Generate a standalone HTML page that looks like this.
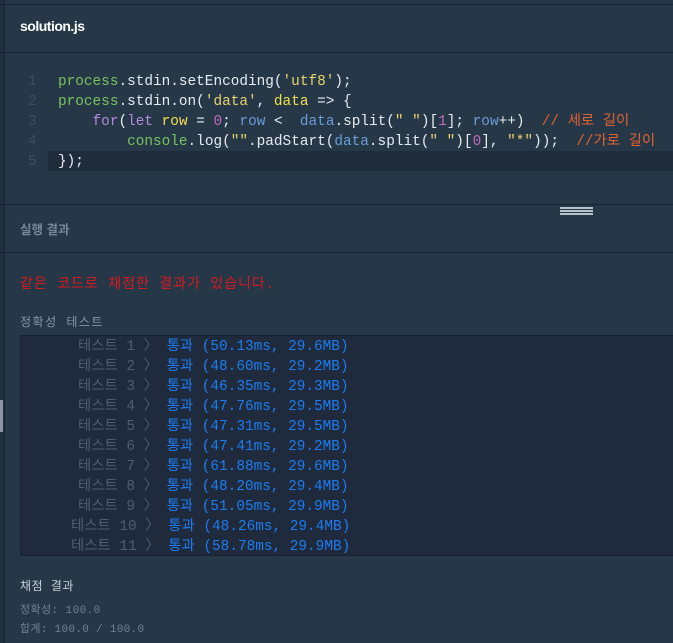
<!DOCTYPE html>
<html><head><meta charset="utf-8"><style>
*{margin:0;padding:0;box-sizing:border-box}
body{width:673px;height:643px;background:#263747;overflow:hidden;position:relative;font-family:"Liberation Mono","Noto Sans CJK KR",monospace;color:#dfe4ea}
.abs{position:absolute}
.hl{position:absolute;left:0;right:0;height:1px;background:#172232}
.code{position:absolute;left:58px;top:71px;font-size:14.4px;line-height:20px;white-space:pre;color:#e6ebf0}
.ln{position:absolute;left:28px;top:71px;font-size:14.4px;line-height:20px;white-space:pre;color:#3f4f60}
.g{color:#78c35f}.y{color:#f4de4c}.p{color:#b489e0}.b{color:#6a9ed8}.n{color:#c06ab8}.c{color:#e0622f}.s{color:#e8d46a}
.box{position:absolute;left:20px;top:335px;width:660px;height:221px;background:#1f2b3c;border:1px solid #17212f}
.row{position:absolute;height:20px;line-height:20px;font-size:14.4px;white-space:pre}
.t{color:#4e5c6b}.ok{color:#1d7cf2}
</style></head><body>
<div class="abs" style="left:0;top:0;width:4px;height:643px;background:#202e3d"></div>
<div class="abs" style="left:4px;top:0;width:1px;height:643px;background:#172232"></div>
<div class="abs" style="left:0;top:400px;width:3px;height:32px;background:#8a96a3"></div>
<div class="hl" style="top:4px"></div>
<div class="abs" style="left:20px;top:18px;font-family:'Liberation Sans',sans-serif;font-weight:bold;font-size:14px;letter-spacing:-0.5px;color:#fff">solution.js</div>
<div class="hl" style="top:52px"></div>
<div class="abs" style="left:48px;top:151px;right:0;height:20px;background:#1f2c3c"></div>
<div class="ln" style="top:72px">1
2
3
4
5</div>
<div class="code" style="top:72px"><span class="g">process</span>.stdin.setEncoding(<span class="s">'utf8'</span>);
<span class="g">process</span>.stdin.on(<span class="s">'data'</span>, <span class="y">data</span> => {
    <span class="p">for</span>(<span class="p">let</span> <span class="y">row</span> = <span class="n">0</span>; <span class="b">row</span> &lt;  <span class="b">data</span>.split(<span class="s">" "</span>)[<span class="n">1</span>]; <span class="b">row</span>++)  <span class="c">// 세로 길이</span>
        <span class="g">console</span>.log(<span class="s">""</span>.padStart(<span class="b">data</span>.split(<span class="s">" "</span>)[<span class="n">0</span>], <span class="s">"*"</span>));  <span class="c">//가로 길이</span>
});</div>
<div class="hl" style="top:204px"></div>
<div class="abs" style="left:560px;top:207px;width:33px;height:2px;background:#b8c2cc"></div>
<div class="abs" style="left:560px;top:210px;width:33px;height:2px;background:#b8c2cc"></div>
<div class="abs" style="left:560px;top:213px;width:33px;height:2px;background:#b8c2cc"></div>
<div class="abs" style="left:20px;top:219px;font-family:'Liberation Sans','Noto Sans CJK KR',sans-serif;font-weight:bold;font-size:12.5px;color:#78889a">실행 결과</div>
<div class="hl" style="top:252px"></div>
<div class="abs" style="left:20px;top:273px;font-size:14px;letter-spacing:1px;color:#d8191f">같은 코드로 채점한 결과가 있습니다.</div>
<div class="abs" style="left:20px;top:313px;font-size:12px;letter-spacing:1.5px;color:#8795a3">정확성  테스트</div>
<div class="box"></div>
<div class="row" style="top:337px;left:78px"><span class="t">테스트 1 〉 </span><span class="ok">통과 (50.13ms, 29.6MB)</span></div>
<div class="row" style="top:357px;left:78px"><span class="t">테스트 2 〉 </span><span class="ok">통과 (48.60ms, 29.2MB)</span></div>
<div class="row" style="top:377px;left:78px"><span class="t">테스트 3 〉 </span><span class="ok">통과 (46.35ms, 29.3MB)</span></div>
<div class="row" style="top:397px;left:78px"><span class="t">테스트 4 〉 </span><span class="ok">통과 (47.76ms, 29.5MB)</span></div>
<div class="row" style="top:417px;left:78px"><span class="t">테스트 5 〉 </span><span class="ok">통과 (47.31ms, 29.5MB)</span></div>
<div class="row" style="top:437px;left:78px"><span class="t">테스트 6 〉 </span><span class="ok">통과 (47.41ms, 29.2MB)</span></div>
<div class="row" style="top:457px;left:78px"><span class="t">테스트 7 〉 </span><span class="ok">통과 (61.88ms, 29.6MB)</span></div>
<div class="row" style="top:477px;left:78px"><span class="t">테스트 8 〉 </span><span class="ok">통과 (48.20ms, 29.4MB)</span></div>
<div class="row" style="top:497px;left:78px"><span class="t">테스트 9 〉 </span><span class="ok">통과 (51.05ms, 29.9MB)</span></div>
<div class="row" style="top:517px;left:71px"><span class="t">테스트 10 〉 </span><span class="ok">통과 (48.26ms, 29.4MB)</span></div>
<div class="row" style="top:537px;left:71px"><span class="t">테스트 11 〉 </span><span class="ok">통과 (58.78ms, 29.9MB)</span></div>
<div class="abs" style="left:20px;top:577px;font-size:12px;letter-spacing:0.5px;color:#c8d0d8">채점 결과</div>
<div class="abs" style="left:20px;top:601px;font-size:11px;letter-spacing:0.4px;color:#6f8193">정확성: 100.0</div>
<div class="abs" style="left:20px;top:620px;font-size:11px;letter-spacing:0.3px;color:#6f8193">합계: 100.0 / 100.0</div>
</body></html>
